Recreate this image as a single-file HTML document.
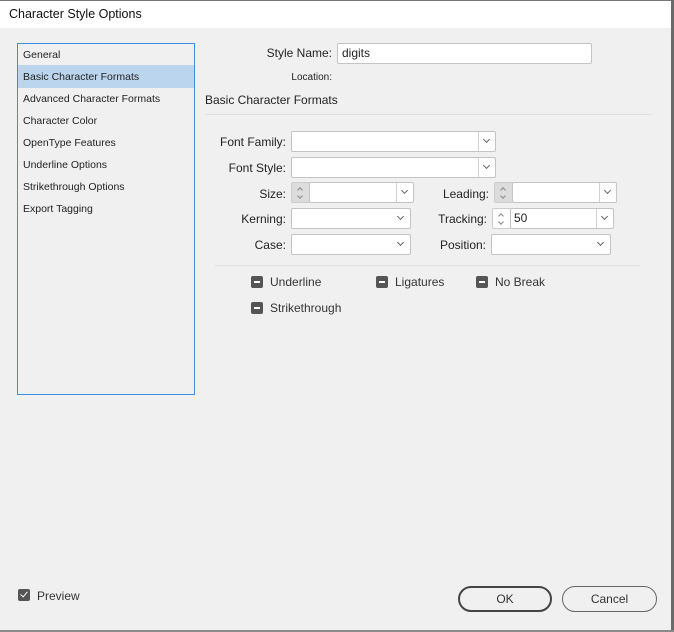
<!DOCTYPE html>
<html><head><meta charset="utf-8"><style>
*{box-sizing:border-box;margin:0;padding:0}
body{width:674px;height:632px;overflow:hidden;background:#f0f0f0;font-family:"Liberation Sans",sans-serif;font-size:12px;color:#222;position:relative}
.a{position:absolute}
.title{left:0;top:0;width:671px;height:28px;background:#fff;border-top:1px solid #777}
.title span{position:absolute;left:9px;top:6px;font-size:12.5px;color:#111}
.rb{left:671px;top:0;width:3px;height:632px;background:#6a6a6a}
.bb{left:0;top:630px;width:674px;height:2px;background:#8a8a8a}
.list{left:17px;top:43px;width:178px;height:352px;border:1px solid #3d8ee0;background:#f0f0f0}
.it{position:absolute;left:5px;font-size:10.5px;color:#222}
.sel{position:absolute;left:0;top:21px;width:176px;height:23px;background:#bcd5ee}
.lbl{position:absolute;text-align:right;font-size:12px;color:#222}
.inp{position:absolute;background:#fff;border:1px solid #c4c4c4;border-radius:2px;height:21px}
.dd{position:absolute;right:0;top:0;width:17px;height:19px;border-left:1px solid #d0d0d0}
.dd:after{content:"";position:absolute;left:5px;top:5px;width:4px;height:4px;border-right:1px solid #666;border-bottom:1px solid #666;transform:rotate(45deg)}
.nd:after{content:"";position:absolute;right:7px;top:5px;width:4px;height:4px;border-right:1px solid #666;border-bottom:1px solid #666;transform:rotate(45deg)}
.sp{position:absolute;width:19px;height:21px;background:#dcdcdc;border:1px solid #ccc;border-radius:2px}
.sp.w{background:#fff}
.sp i{position:absolute;left:6px;width:4px;height:4px;border-left:1px solid #888;border-top:1px solid #888}
.cb{position:absolute;width:12px;height:12px;background:#555;border-radius:2px}
.cb:after{content:"";position:absolute;left:3px;top:5px;width:6px;height:2px;background:#fff}
.ct{position:absolute;font-size:12px;color:#333}
.sep{position:absolute;height:1px;background:#e0e0e0}
.btn{position:absolute;height:26px;border-radius:13px;text-align:center;line-height:23px;font-size:12px;color:#333}
</style></head><body>
<div class="a title"><span>Character Style Options</span></div>
<div class="a rb"></div><div class="a bb"></div>
<div class="a list">
<div class="sel"></div>
<div class="it" style="top:5px">General</div>
<div class="it" style="top:27px">Basic Character Formats</div>
<div class="it" style="top:49px">Advanced Character Formats</div>
<div class="it" style="top:71px">Character Color</div>
<div class="it" style="top:93px">OpenType Features</div>
<div class="it" style="top:115px">Underline Options</div>
<div class="it" style="top:137px">Strikethrough Options</div>
<div class="it" style="top:159px">Export Tagging</div>
</div>
<div class="lbl" style="left:200px;width:132px;top:46px">Style Name:</div>
<div class="inp" style="left:337px;top:43px;width:255px;height:21px;padding:2px 4px;font-size:12px">digits</div>
<div class="lbl" style="left:200px;width:132px;top:72px;font-size:10px">Location:</div>
<div class="a" style="left:205px;top:93px;font-size:12px">Basic Character Formats</div>
<div class="sep" style="left:205px;top:114px;width:447px"></div>

<div class="lbl" style="left:200px;width:86px;top:135px">Font Family:</div>
<div class="inp" style="left:291px;top:131px;width:205px"><div class="dd"></div></div>
<div class="lbl" style="left:200px;width:86px;top:161px">Font Style:</div>
<div class="inp" style="left:291px;top:157px;width:205px"><div class="dd"></div></div>

<div class="lbl" style="left:200px;width:86px;top:187px">Size:</div>
<div class="sp" style="left:291px;top:182px"><i style="top:5px;transform:rotate(45deg)"></i><i style="top:11px;transform:rotate(225deg)"></i></div>
<div class="inp" style="left:309px;top:182px;width:105px"><div class="dd"></div></div>
<div class="lbl" style="left:400px;width:89px;top:187px">Leading:</div>
<div class="sp" style="left:494px;top:182px"><i style="top:5px;transform:rotate(45deg)"></i><i style="top:11px;transform:rotate(225deg)"></i></div>
<div class="inp" style="left:512px;top:182px;width:105px"><div class="dd"></div></div>

<div class="lbl" style="left:200px;width:86px;top:212px">Kerning:</div>
<div class="inp nd" style="left:291px;top:208px;width:120px"></div>
<div class="lbl" style="left:400px;width:87px;top:212px">Tracking:</div>
<div class="sp w" style="left:492px;top:208px"><i style="top:5px;transform:rotate(45deg)"></i><i style="top:11px;transform:rotate(225deg)"></i></div>
<div class="inp" style="left:510px;top:208px;width:104px;padding:2px 3px;font-size:12px">50<div class="dd"></div></div>

<div class="lbl" style="left:200px;width:86px;top:238px">Case:</div>
<div class="inp nd" style="left:291px;top:234px;width:120px"></div>
<div class="lbl" style="left:400px;width:86px;top:238px">Position:</div>
<div class="inp nd" style="left:491px;top:234px;width:120px"></div>

<div class="sep" style="left:215px;top:265px;width:425px"></div>
<div class="cb" style="left:251px;top:276px"></div><div class="ct" style="left:270px;top:275px">Underline</div>
<div class="cb" style="left:376px;top:276px"></div><div class="ct" style="left:395px;top:275px">Ligatures</div>
<div class="cb" style="left:476px;top:276px"></div><div class="ct" style="left:495px;top:275px">No Break</div>
<div class="cb" style="left:251px;top:302px"></div><div class="ct" style="left:270px;top:301px">Strikethrough</div>

<div class="a" style="left:18px;top:589px;width:12px;height:12px;background:#555;border-radius:2px"><div style="position:absolute;left:4px;top:1px;width:4px;height:7px;border-right:1.5px solid #fff;border-bottom:1.5px solid #fff;transform:rotate(40deg)"></div></div>
<div class="ct" style="left:37px;top:589px">Preview</div>
<div class="btn" style="left:458px;top:586px;width:94px;border:2px solid #444">OK</div>
<div class="btn" style="left:562px;top:586px;width:95px;border:1px solid #666;line-height:24px">Cancel</div>
</body></html>
